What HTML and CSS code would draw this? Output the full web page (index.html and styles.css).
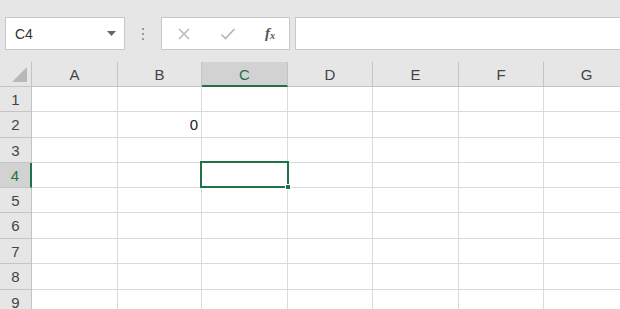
FILE: index.html
```html
<!DOCTYPE html>
<html lang="en">
<head>
    <meta charset="UTF-8">
    <title>Sheet</title>
    <link rel="stylesheet" href="styles.css">
</head>
<body>
    <div class="formula-bar">
        <div class="name-box">
            <span>C4</span>
            <svg class="caret" width="9" height="5" viewBox="0 0 9 5"><path d="M0 0h9L4.5 5z" fill="#666"/></svg>
        </div>
        <div class="grip"><i></i><i></i><i></i></div>
        <div class="fx-buttons">
            <svg width="14" height="14" viewBox="0 0 14 14"><path d="M2 2l10 10M12 2L2 12" stroke="#b4b4b4" stroke-width="1.4"/></svg>
            <svg width="16" height="14" viewBox="0 0 16 14"><path d="M1.5 7.5l4 4L14.5 2" stroke="#b4b4b4" stroke-width="1.6" fill="none"/></svg>
            <span class="fx">f<sub>x</sub></span>
        </div>
        <div class="formula-input"></div>
    </div>

    <div class="grid">
        <div class="corner"><div class="tri"></div></div>
        <div class="col-head">A</div>
        <div class="col-head">B</div>
        <div class="col-head active">C</div>
        <div class="col-head">D</div>
        <div class="col-head">E</div>
        <div class="col-head">F</div>
        <div class="col-head">G</div>
    </div>
    <div class="grid body" id="rows"></div>

    <script>
        let rows = document.getElementById("rows");
        for (let r = 1; r <= 9; r++) {
            let head = document.createElement("div");
            head.className = "row-head" + (r === 4 ? " active" : "");
            head.innerText = r;
            rows.appendChild(head);
            for (let c = 0; c < 7; c++) {
                let cell = document.createElement("div");
                cell.className = "cell";
                if (r === 2 && c === 1) cell.innerText = "0";
                if (r === 4 && c === 2) cell.className = "cell selected";
                rows.appendChild(cell);
            }
        }
    </script>
</body>
</html>
```

FILE: styles.css
```css
body {
    margin: 0;
    background: #e6e6e6;
    font-family: "Liberation Sans", Arial, sans-serif;
    overflow: hidden;
    width: 620px;
    height: 309px;
}

.formula-bar {
    display: flex;
    align-items: stretch;
    height: 33px;
    padding: 17px 0 12px 5px;
}

.name-box {
    width: 120px;
    background: #fff;
    border: 1px solid #c8c8c8;
    display: flex;
    align-items: center;
    justify-content: space-between;
    padding: 0 8px 0 9px;
    box-sizing: border-box;
    font-size: 14px;
    color: #333;
}

.grip {
    width: 36px;
    display: flex;
    flex-direction: column;
    align-items: center;
    justify-content: center;
    gap: 3px;
}

.grip i {
    width: 2px;
    height: 2px;
    background: #999;
}

.fx-buttons {
    width: 129px;
    background: #fff;
    border: 1px solid #c8c8c8;
    box-sizing: border-box;
    display: flex;
    align-items: center;
    justify-content: space-between;
    padding: 0 14px 0 15px;
}

.fx {
    font-family: "Liberation Serif", serif;
    font-style: italic;
    font-weight: bold;
    font-size: 15px;
    color: #555;
}

.fx sub {
    font-size: 10px;
    vertical-align: -1px;
}

.formula-input {
    flex: 1;
    margin-left: 5px;
    background: #fff;
    border: 1px solid #c8c8c8;
    border-right: none;
}

.grid {
    display: grid;
    grid-template-columns: 32px 86px 84px 86px 85px 86px 85px 86px;
    grid-template-rows: 25px;
    width: 630px;
}

.grid.body {
    grid-template-rows: 25px 26px 25px 25px 25px 26px 25px 26px 25px;
}

.grid > div {
    box-sizing: border-box;
}

.corner {
    background: #e6e6e6;
    border-right: 1px solid #c4c4c4;
    border-bottom: 1px solid #c4c4c4;
    position: relative;
}

.tri {
    position: absolute;
    right: 4px;
    bottom: 4px;
    width: 0;
    height: 0;
    border-left: 15px solid transparent;
    border-bottom: 15px solid #b8b8b8;
}

.col-head {
    background: #e6e6e6;
    border-right: 1px solid #c4c4c4;
    border-bottom: 1px solid #c4c4c4;
    text-align: center;
    font-size: 15px;
    line-height: 25px;
    color: #444;
}

.col-head.active {
    background: #d2d2d2;
    border-bottom: 2px solid #217346;
    color: #217346;
}

.row-head {
    background: #e6e6e6;
    border-right: 1px solid #c4c4c4;
    border-bottom: 1px solid #c4c4c4;
    text-align: center;
    font-size: 15px;
    line-height: 25px;
    color: #444;
}

.row-head.active {
    background: #d2d2d2;
    border-right: 2px solid #217346;
    color: #217346;
}

.cell {
    background: #fff;
    border-right: 1px solid #dadada;
    border-bottom: 1px solid #dadada;
    text-align: right;
    padding-right: 3px;
    font-size: 15px;
    line-height: 25px;
    color: #222;
}

.cell.selected {
    position: relative;
}

.cell.selected::before {
    content: "";
    position: absolute;
    left: -2px;
    top: -2px;
    right: -2px;
    bottom: -1px;
    border: 2px solid #217346;
}

.cell.selected::after {
    content: "";
    position: absolute;
    right: -4px;
    bottom: -3px;
    width: 6px;
    height: 6px;
    background: #217346;
    border: 1px solid #fff;
    box-sizing: border-box;
}
```
